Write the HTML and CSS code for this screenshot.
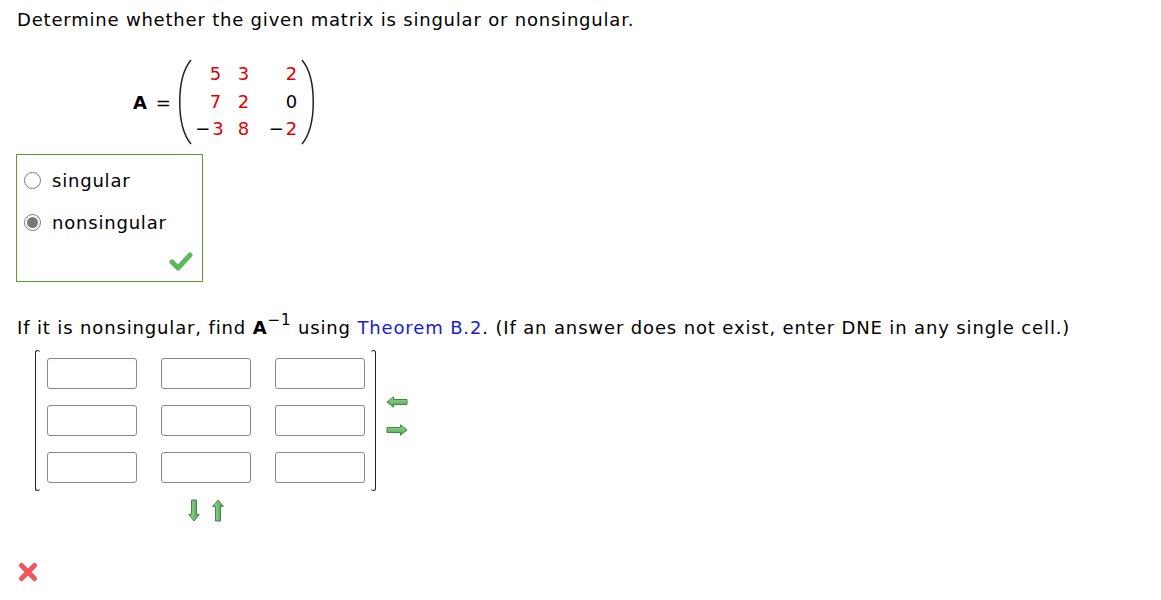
FILE: index.html
```html
<!DOCTYPE html>
<html lang="en">
<head>
    <meta charset="UTF-8">
    <title>Singular or nonsingular</title>
    <link rel="stylesheet" href="styles.css">
</head>
<body>
    <svg width="0" height="0" class="defs">
        <defs>
            <linearGradient id="gv" x1="0" y1="0" x2="0" y2="1">
                <stop offset="0" stop-color="#9fd89f"/>
                <stop offset="1" stop-color="#4fa04f"/>
            </linearGradient>
            <linearGradient id="gh" x1="0" y1="0" x2="1" y2="0">
                <stop offset="0" stop-color="#9fd89f"/>
                <stop offset="1" stop-color="#4fa04f"/>
            </linearGradient>
        </defs>
    </svg>
    <div class="question">
        <p class="prompt">Determine whether the given matrix is singular or nonsingular.</p>

        <div class="matrix-eq">
            <span class="lhs"><b>A</b> =</span>
            <svg class="paren" width="18" height="88" viewBox="0 0 18 88">
                <path d="M15 2 C0 20 0 68 15 86" fill="none" stroke="#222" stroke-width="1.5"/>
            </svg>
            <div class="matrix">
                <span class="red">5</span><span class="red">3</span><span class="red">2</span>
                <span class="red">7</span><span class="red">2</span><span>0</span>
                <span>&minus;<em class="red">3</em></span><span class="red">8</span><span>&minus;<em class="red">2</em></span>
            </div>
            <svg class="paren" width="18" height="88" viewBox="0 0 18 88">
                <path d="M3 2 C18 20 18 68 3 86" fill="none" stroke="#222" stroke-width="1.5"/>
            </svg>
        </div>

        <div class="choices">
            <label class="choice"><span class="radio"></span>singular</label>
            <label class="choice"><span class="radio checked"></span>nonsingular</label>
            <svg class="tick" width="24" height="20" viewBox="0 0 24 20">
                <path d="M3 11 L9 17 L21 4" fill="none" stroke="#5cb85c" stroke-width="5" stroke-linecap="round" stroke-linejoin="round"/>
            </svg>
        </div>

        <p class="prompt second">If it is nonsingular, find <b>A</b><sup>&minus;1</sup> using <a href="#">Theorem B.2</a>. (If an answer does not exist, enter DNE in any single cell.)</p>

        <div class="answer">
            <div class="bracket left"></div>
            <div class="cells">
                <input type="text"><input type="text"><input type="text">
                <input type="text"><input type="text"><input type="text">
                <input type="text"><input type="text"><input type="text">
            </div>
            <div class="bracket right"></div>
            <div class="col-arrows">
                <svg width="22" height="12" viewBox="0 0 22 12">
                    <path d="M1 6 L7.5 0.8 L7.5 3.5 L21 3.5 L21 8.5 L7.5 8.5 L7.5 11.2 Z" fill="url(#gv)" stroke="#3f8a3f" stroke-width="1" stroke-linejoin="round"/>
                </svg>
                <svg width="22" height="12" viewBox="0 0 22 12">
                    <path d="M21 6 L14.5 0.8 L14.5 3.5 L1 3.5 L1 8.5 L14.5 8.5 L14.5 11.2 Z" fill="url(#gv)" stroke="#3f8a3f" stroke-width="1" stroke-linejoin="round"/>
                </svg>
            </div>
        </div>

        <div class="row-arrows">
            <svg width="12" height="23" viewBox="0 0 12 23">
                <path d="M6 22 L0.8 15.5 L3.5 15.5 L3.5 1 L8.5 1 L8.5 15.5 L11.2 15.5 Z" fill="url(#gh)" stroke="#3f8a3f" stroke-width="1" stroke-linejoin="round"/>
            </svg>
            <svg width="12" height="23" viewBox="0 0 12 23">
                <path d="M6 1 L0.8 7.5 L3.5 7.5 L3.5 22 L8.5 22 L8.5 7.5 L11.2 7.5 Z" fill="url(#gh)" stroke="#3f8a3f" stroke-width="1" stroke-linejoin="round"/>
            </svg>
        </div>

        <svg class="cross" width="22" height="22" viewBox="0 0 22 22">
            <path d="M4.5 4.5 L17.5 17.5 M17.5 4.5 L4.5 17.5" stroke="#f2545e" stroke-width="5" stroke-linecap="round"/>
        </svg>
    </div>
</body>
</html>
```

FILE: styles.css
```css
body {
    margin: 0;
    padding: 0 16px;
    font-family: 'DejaVu Sans', Verdana, sans-serif;
    font-size: 18px;
    letter-spacing: 0.8px;
    color: #000;
    background: #fff;
}
.defs {
    position: absolute;
}
.prompt {
    margin: 8px 0 0 1px;
    line-height: 24px;
}
.matrix-eq {
    display: flex;
    align-items: center;
    margin: 26px 0 0 117px;
}
.lhs {
    margin-right: 4px;
    letter-spacing: 1.5px;
}
.matrix {
    display: grid;
    grid-template-columns: 26px 12px 32px;
    row-gap: 3px;
    column-gap: 16px;
    text-align: right;
    line-height: 24.5px;
    letter-spacing: 0;
    margin: 0 2px 0 1px;
}
.matrix em {
    font-style: normal;
    margin-left: 2px;
}
.red {
    color: #e00000;
}
.choices {
    position: relative;
    width: 187px;
    height: 128px;
    margin-top: 8px;
    border: 1px solid #5a9e2f;
    padding-top: 13px;
    box-sizing: border-box;
}
.choice {
    display: flex;
    align-items: center;
    height: 24px;
    margin-bottom: 18px;
    padding-left: 7px;
}
.radio {
    width: 17px;
    height: 17px;
    border: 1px solid #7a7a7a;
    border-radius: 50%;
    margin-right: 11px;
    box-sizing: border-box;
    display: inline-flex;
    align-items: center;
    justify-content: center;
}
.radio.checked::after {
    content: "";
    width: 11px;
    height: 11px;
    border-radius: 50%;
    background: #777;
}
.tick {
    position: absolute;
    right: 9px;
    bottom: 10px;
}
.second {
    margin-top: 28px;
    letter-spacing: 0.86px;
}
.second sup {
    font-size: 15px;
    position: relative;
    top: -2px;
}
.second a {
    color: #1a1ad6;
    text-decoration: none;
}
.answer {
    display: flex;
    align-items: center;
    margin: 10px 0 0 19px;
}
.bracket {
    width: 5px;
    height: 141px;
    border: 1px solid #222;
    border-radius: 3px;
    box-sizing: border-box;
}
.bracket.left {
    border-right: none;
}
.bracket.right {
    border-left: none;
}
.cells {
    display: grid;
    grid-template-columns: repeat(3, 90px);
    column-gap: 24px;
    row-gap: 16px;
    padding: 0 6px 0 7px;
}
.cells input {
    width: 90px;
    height: 31px;
    box-sizing: border-box;
    border: 1px solid #888;
    border-radius: 3px;
    margin: 0;
}
.col-arrows {
    display: flex;
    flex-direction: column;
    gap: 16px;
    margin: 0 0 10px 10px;
}
.row-arrows {
    display: flex;
    gap: 12px;
    margin: 8px 0 0 172px;
}
.cross {
    display: block;
    margin: 39px 0 0 1px;
}
```
